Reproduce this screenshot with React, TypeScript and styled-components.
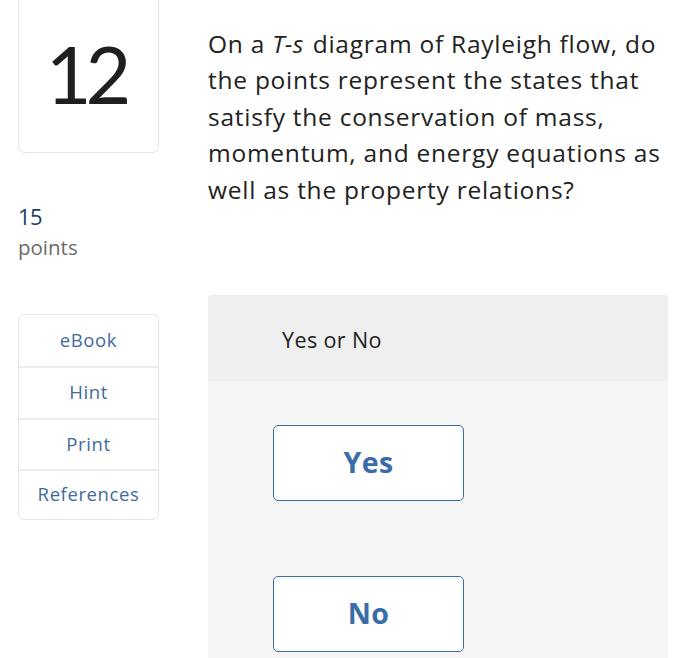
import React from "react";
import styled, { createGlobalStyle } from "styled-components";

const Global = createGlobalStyle`
  html, body { margin: 0; padding: 0; background: #ffffff; }
  body { font-family: "Open Sans", "Liberation Sans", sans-serif; color: #222; }
  * { box-sizing: border-box; }
`;

const Page = styled.div`
  width: 700px;
  height: 658px;
  overflow: hidden;
  display: grid;
  grid-template-columns: 141px 460px;
  column-gap: 49px;
  padding-left: 18px;
`;

const LeftCol = styled.div`
  display: flex;
  flex-direction: column;
`;

const NumberCard = styled.div`
  height: 153px;
  border: 1px solid #e6e6e6;
  border-top: none;
  border-radius: 0 0 7px 7px;
  display: flex;
  align-items: center;
  justify-content: center;
  padding-bottom: 6px;
  font-family: "Lato", "Open Sans", sans-serif;
  font-size: 79px;
  font-weight: 400;
  color: #1f1f1f;
  letter-spacing: -6px;
  text-indent: -6px;
`;

const Points = styled.div`
  margin-top: 48px;
  display: flex;
  flex-direction: column;
  line-height: 31px;
`;

const PointsValue = styled.span`
  font-size: 22px;
  color: #1d3c66;
  letter-spacing: -0.5px;
`;

const PointsLabel = styled.span`
  font-size: 20.5px;
  color: #6a6a6a;
`;

const ToolList = styled.div`
  margin-top: 51px;
  border: 1px solid #e6e6e6;
  border-radius: 6px;
  display: flex;
  flex-direction: column;
`;

const ToolItem = styled.div<{ $h: number }>`
  height: ${(p) => p.$h}px;
  display: flex;
  align-items: center;
  justify-content: center;
  padding-bottom: 3px;
  font-size: 18.5px;
  letter-spacing: 0.6px;
  color: #3f6b9e;
  & + & { border-top: 2px solid #ececec; }
`;

const RightCol = styled.div`
  display: flex;
  flex-direction: column;
`;

const Question = styled.p`
  margin: 26px 0 0;
  font-size: 24.5px;
  letter-spacing: 0.75px;
  line-height: 36.4px;
  color: #222;
`;

const Variable = styled.em`
  font-style: italic;
  letter-spacing: 0.3px;
  padding-right: 2px;
`;

const Panel = styled.div`
  margin-top: 87px;
  flex: 1;
  background: #f5f5f5;
  border-radius: 4px 4px 0 0;
  display: flex;
  flex-direction: column;
`;

const PanelHead = styled.div`
  height: 86px;
  background: #efefef;
  border-radius: 4px 4px 0 0;
  display: flex;
  align-items: center;
  padding-left: 74px;
  padding-top: 2px;
  font-size: 21.5px;
  letter-spacing: 0.4px;
  color: #222;
`;

const Choices = styled.div`
  display: flex;
  flex-direction: column;
  gap: 75px;
  padding: 44px 0 0 65px;
`;

const ChoiceButton = styled.button`
  width: 191px;
  height: 76px;
  background: #ffffff;
  border: 1.5px solid #3c6ea6;
  border-radius: 5px;
  font-family: inherit;
  font-size: 28.5px;
  letter-spacing: 0.4px;
  font-weight: 700;
  color: #3a6da8;
  display: flex;
  align-items: center;
  justify-content: center;
  padding: 0 0 2px;
`;

export default function App() {
  const tools: [string, number][] = [
    ["eBook", 51],
    ["Hint", 52],
    ["Print", 51],
    ["References", 50],
  ];
  return (
    <>
      <Global />
      <Page>
        <LeftCol>
          <NumberCard>12</NumberCard>
          <Points>
            <PointsValue>15</PointsValue>
            <PointsLabel>points</PointsLabel>
          </Points>
          <ToolList>
            {tools.map(([t, h]) => (
              <ToolItem key={t} $h={h}>
                {t}
              </ToolItem>
            ))}
          </ToolList>
        </LeftCol>
        <RightCol>
          <Question>
            On a <Variable>T-s</Variable> diagram of Rayleigh flow, do the points represent
            the states that satisfy the conservation of mass, momentum, and energy equations
            as well as the property relations?
          </Question>
          <Panel>
            <PanelHead>Yes or No</PanelHead>
            <Choices>
              <ChoiceButton>Yes</ChoiceButton>
              <ChoiceButton>No</ChoiceButton>
            </Choices>
          </Panel>
        </RightCol>
      </Page>
    </>
  );
}
